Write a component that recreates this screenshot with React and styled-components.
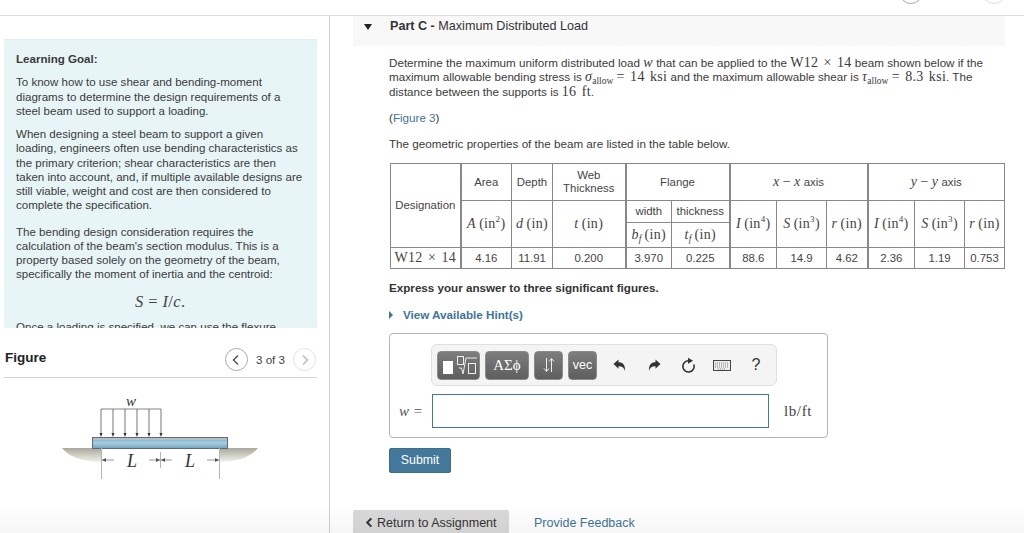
import React from "react";
import styled, { createGlobalStyle } from "styled-components";

const Global = createGlobalStyle`
  html, body { margin: 0; padding: 0; background: #fff; }
  body { font-family: "Liberation Sans", Arial, sans-serif; color: #333; }
`;

const Page = styled.div`
  position: relative;
  width: 1024px;
  height: 533px;
  overflow: hidden;
  background: #fff;
`;
const TopBar = styled.div`
  height: 15px;
  border-bottom: 1px solid #dcdcdc;
  overflow: hidden;
  display: flex;
  justify-content: flex-end;
  gap: 59px;
  padding-right: 18px;
`;
const TopCircle = styled.div`
  width: 22px;
  height: 22px;
  margin-top: -20px;
  border-radius: 50%;
  border: 1px solid ${(p) => (p.$faint ? "#ddd" : "#aaa")};
`;
const Main = styled.div`
  display: flex;
  height: 517px;
`;
const LeftCol = styled.aside`
  flex: none;
  box-sizing: border-box;
  border-right: 1px solid #c8d1e0;
  width: 330px;
  padding: 23px 12px 0 4px;
`;
const Goal = styled.section`
  height: 289px;
  box-sizing: border-box;
  overflow: hidden;
  background: #e8f5f7;
  border-top: 1px solid #e2edf0;
  padding: 12px 11.5px 0 12px;
  font-size: 11.55px;
  line-height: 14.25px;
  color: #3a3a3a;
`;
const GoalTitle = styled.div`
  font-weight: bold;
  margin-bottom: 9px;
`;
const GoalPara = styled.p`
  margin: 0 0 ${(p) => p.$gap || 9}px;
`;
const Formula = styled.div`
  text-align: center;
  font-family: "Liberation Serif", serif;
  font-size: 16.5px;
  line-height: 18px;
  letter-spacing: 0.4px;
  margin: 11px 0 9px -1px;
  color: #444;
`;
const FigureHead = styled.header`
  display: flex;
  align-items: center;
  height: 37px;
  margin-top: 12px;
  border-bottom: 1px solid #d4d4d4;
  padding-right: 1px;
`;
const FigureTitle = styled.h2`
  margin: 0 auto 3px 1px;
  font-size: 13.5px;
  font-weight: bold;
  color: #222;
`;
const Pager = styled.div`
  display: flex;
  align-items: center;
  gap: 8px;
  font-size: 11.6px;
  color: #444;
  margin-top: 2px;
`;
const Round = styled.div`
  width: 23px;
  height: 23px;
  box-sizing: border-box;
  border-radius: 50%;
  border: 1px solid ${(p) => (p.$off ? "#e2e2e2" : "#aaa")};
  color: ${(p) => (p.$off ? "#bbb" : "#555")};
  display: flex;
  align-items: center;
  justify-content: center;
`;
const Diagram = styled.svg`
  display: block;
`;
const RightCol = styled.main`
  flex: 1;
  padding-left: 23px;
  padding-right: 19px;
`;
const PartBar = styled.div`
  height: 30px;
  background: #f8f8f8;
  display: flex;
  padding-left: 11px;
  font-size: 12.6px;
  line-height: 21px;
  color: #333;
`;
const Triangle = styled.div`
  width: 0;
  height: 0;
  margin-top: 8px;
  margin-right: 18px;
  border-left: 4.5px solid transparent;
  border-right: 4.5px solid transparent;
  border-top: 6px solid #222;
`;
const Strong = styled.b`
  font-weight: bold;
`;
const Body = styled.div`
  padding-left: 36px;
  font-size: 11.65px;
  line-height: 14.3px;
  color: #3a3a3a;
`;
const Para = styled.p`
  margin: ${(p) => p.$top}px 0 0;
  width: 600px;
`;
const Link = styled.span`
  color: #3f7496;
`;
const Mi = styled.i`
  font-family: "Liberation Serif", serif;
  font-size: ${(p) => p.$size || 14}px;
  line-height: 1;
  letter-spacing: 0.3px;
`;
const Mn = styled.span`
  font-family: "Liberation Serif", serif;
  font-size: ${(p) => p.$size || 14}px;
  line-height: 1;
  letter-spacing: 0.3px;
  word-spacing: 1.5px;
`;
const Sub = styled.sub`
  font-family: "Liberation Serif", serif;
  font-size: 9.5px;
  line-height: 0;
`;
const Sup = styled.sup`
  font-family: "Liberation Serif", serif;
  font-size: 9px;
  line-height: 0;
`;
const Table = styled.table`
  margin: 12px 0 0 1px;
  width: 614px;
  table-layout: fixed;
  border-collapse: collapse;
  border-top: 1px solid #222;
  border-left: 1px solid #555;
  border-right: 1px solid #555;
  border-bottom: 1px solid #555;
  font-size: 11.4px;
  line-height: 13.5px;
  color: #444;
`;
const Tr = styled.tr`
  height: ${(p) => p.$h}px;
`;
const Td = styled.td`
  border: 1px solid #888;
  border-right-width: ${(p) => (p.$thick ? 2 : 1)}px;
  padding: 0;
  text-align: center;
  vertical-align: middle;
  white-space: nowrap;
`;
const Express = styled.p`
  margin: 12px 0 0;
  font-weight: bold;
  color: #333;
`;
const Hint = styled.div`
  margin-top: 12px;
  display: flex;
  align-items: center;
  font-weight: bold;
  color: #3f7496;
`;
const HintArrow = styled.div`
  width: 0;
  height: 0;
  margin-right: 10px;
  border-top: 4.5px solid transparent;
  border-bottom: 4.5px solid transparent;
  border-left: 4.5px solid #3f7496;
`;
const AnswerBox = styled.div`
  margin-top: 11px;
  width: 439px;
  height: 105px;
  box-sizing: border-box;
  border: 1px solid #b4b4b4;
  border-radius: 4px;
  padding: 10px 9px 0 9px;
`;
const Toolbar = styled.div`
  margin-left: 32px;
  width: 346px;
  height: 42px;
  box-sizing: border-box;
  display: flex;
  align-items: center;
  padding: 0 5px;
  gap: 5px;
  background: #f4f4f4;
  border: 1px solid #e0e0e0;
  border-radius: 6px;
`;
const ToolBtn = styled.div`
  width: ${(p) => p.$w}px;
  height: 29px;
  flex: none;
  display: flex;
  align-items: center;
  justify-content: center;
  border-radius: 4px;
  border: 1px solid #8a8a8a;
  box-sizing: border-box;
  background: linear-gradient(#7d7d7d, #5e5e5e);
  color: #fff;
  font-size: ${(p) => p.$fs || 13}px;
  font-family: ${(p) => (p.$serif ? '"Liberation Serif", serif' : '"Liberation Sans", sans-serif')};
`;
const ToolIcon = styled.div`
  width: ${(p) => p.$w}px;
  flex: none;
  margin-left: ${(p) => p.$ml}px;
  display: flex;
  justify-content: center;
  color: #333;
  font-size: 16px;
`;
const InputRow = styled.div`
  display: flex;
  align-items: center;
  margin-top: 8px;
`;
const Label = styled.div`
  width: 33px;
  color: #555;
  font-family: "Liberation Serif", serif;
  font-size: 15px;
  word-spacing: 1px;
`;
const Input = styled.div`
  width: 337px;
  height: 34px;
  box-sizing: border-box;
  border: 1px solid #44789b;
  background: #fff;
`;
const Unit = styled.div`
  margin-left: 15px;
  font-family: "Liberation Serif", serif;
  font-size: 15px;
  letter-spacing: 0.6px;
  color: #444;
`;
const Submit = styled.div`
  margin-top: 10px;
  width: 62px;
  height: 25px;
  box-sizing: border-box;
  display: flex;
  align-items: center;
  justify-content: center;
  background: #44789b;
  border: 1px solid #3d6f8f;
  border-radius: 2px;
  color: #fff;
  font-size: 12.3px;
`;
const Footer = styled.div`
  margin-top: 37px;
  display: flex;
  align-items: center;
  gap: 25px;
  font-size: 12.5px;
`;
const ReturnBtn = styled.div`
  width: 156px;
  height: 24px;
  flex: none;
  box-sizing: border-box;
  display: flex;
  align-items: center;
  gap: 2px;
  padding: 1px 0 0 11px;
  background: #d9d9d9;
  border-radius: 2px 2px 0 0;
  color: #333;
`;
const FeedbackLink = styled(Link)`
  padding-top: 1px;
`;
const Shade = styled.div`
  position: absolute;
  left: 0;
  right: 0;
  bottom: 0;
  height: 30px;
  pointer-events: none;
  background: linear-gradient(rgba(0, 0, 0, 0), rgba(0, 0, 0, 0.035));
`;

const Chevron = ({ left, size = 12, sw = 1.5 }) => (
  <svg width={size} height={size} viewBox="0 0 12 12" fill="none" stroke="currentColor" strokeWidth={sw}>
    <path d={left ? "M8 1.5 3.5 6 8 10.5" : "M4 1.5 8.5 6 4 10.5"} />
  </svg>
);

const BeamDiagram = () => {
  const xs = [101, 113, 125, 137, 149, 161];
  return (
    <Diagram width="313" height="110" viewBox="4 378 313 110">
      <defs>
        <linearGradient id="beam" x1="0" y1="0" x2="0" y2="1">
          <stop offset="0" stopColor="#6ea8c6" />
          <stop offset="0.5" stopColor="#a7cfe0" />
          <stop offset="1" stopColor="#6ba3c0" />
        </linearGradient>
        <linearGradient id="g1" x1="0" y1="0" x2="0" y2="1">
          <stop offset="0" stopColor="#a9a998" />
          <stop offset="1" stopColor="#f2f2ec" />
        </linearGradient>
      </defs>
      <text x="131" y="406" fontFamily="Liberation Serif, serif" fontStyle="italic" fontSize="15" fill="#333" textAnchor="middle">w</text>
      <path d="M101 409H161" stroke="#666" strokeWidth="0.8" fill="none" />
      {xs.map((x) => (
        <g key={x}>
          <path d={`M${x} 409V435`} stroke="#555" strokeWidth="0.8" />
          <path d={`M${x - 1.5} 433H${x + 1.5}L${x} 437Z`} fill="#333" />
        </g>
      ))}
      <path d="M62 448H101V462C85 462 70 458 62 448Z" fill="url(#g1)" />
      <path d="M219 448H258C250 458 235 462 219 462Z" fill="url(#g1)" />
      <path d="M66 448.5H101M219 448.5H254" stroke="#aaa" strokeWidth="1" />
      <rect x="92.5" y="437.5" width="135" height="11" fill="url(#beam)" stroke="#667" strokeWidth="1" />
      <rect x="93" y="438" width="134" height="2" fill="#b5c0c6" />
      <path d="M101.5 448V479M219.5 448V479M160.5 452V468" stroke="#b5b5b5" strokeWidth="1" />
      <path d="M102 460H114M149 460H172M207 460H219" stroke="#999" strokeWidth="1" />
      <path d="M102 460l4-2v4ZM219 460l-4-2v4ZM160 460l-4-2v4ZM161 460l4-2v4Z" fill="#555" />
      <text x="132" y="467" fontFamily="Liberation Serif, serif" fontStyle="italic" fontSize="18" fill="#333" textAnchor="middle">L</text>
      <text x="190" y="467" fontFamily="Liberation Serif, serif" fontStyle="italic" fontSize="18" fill="#333" textAnchor="middle">L</text>
    </Diagram>
  );
};

const TemplateIcon = () => (
  <svg width="41" height="27" viewBox="0 0 41 27" fill="none">
    <rect x="5" y="9" width="10" height="13" fill="#fff" />
    <rect x="19.5" y="4.5" width="6" height="8" stroke="#eee" strokeWidth="1" />
    <path d="M21 16l2.5 0 1.5 6 3-16H39" stroke="#eee" strokeWidth="1" />
    <rect x="30.5" y="11.5" width="7" height="10" stroke="#eee" strokeWidth="1" />
  </svg>
);
const SwapIcon = () => (
  <svg width="14" height="16" viewBox="0 0 14 16" fill="none" stroke="#eee" strokeWidth="1">
    <path d="M4.5 1V14M2 11.5 4.5 14.5 7 11.5" />
    <path d="M9.5 15V2M7 4.5 9.5 1.5 12 4.5" />
  </svg>
);
const UndoIcon = ({ flip }) => (
  <svg width="13" height="13" viewBox="0 0 13 13" fill="#333" transform={flip ? "scale(-1 1)" : undefined}>
    <path d="M0.5 5 5.5 0.5V3.2C9.5 3.2 12.5 5.5 12 12 11 8.5 9 7.3 5.5 7.3V9.7Z" />
  </svg>
);
const ResetIcon = () => (
  <svg width="15" height="16" viewBox="0 0 15 16" fill="none">
    <path d="M7 3.8A5.6 5.6 0 1 0 12.8 7.6" stroke="#333" strokeWidth="1.6" />
    <path d="M7 0.8 12 3.8 7 6.8Z" fill="#333" />
  </svg>
);
const KeyboardIcon = () => (
  <svg width="18" height="11" viewBox="0 0 18 11" fill="#eee" stroke="#444" strokeWidth="1">
    <rect x="0.5" y="0.5" width="17" height="10" />
    <path d="M2 3H16M2 5H16M2 7H16M5 9H13" stroke="#888" strokeWidth="1" strokeDasharray="1 1" fill="none" />
  </svg>
);

const In = ({ v, s, p = 0 }) => (
  <>
    <Mi>{v}</Mi>{s ? <Sub><i>{s}</i></Sub> : null} <Mn>(in{p ? <Sup>{p}</Sup> : null})</Mn>
  </>
);

const Cols = [70, 51, 41, 73, 46, 58, 47, 50, 41, 47, 50, 40];

const App = () => (
  <Page>
    <Global />
    <TopBar>
      <TopCircle />
      <TopCircle $faint />
    </TopBar>
    <Main>
      <LeftCol>
        <Goal>
          <GoalTitle>Learning Goal:</GoalTitle>
          <GoalPara>To know how to use shear and bending-moment diagrams to determine the design requirements of a steel beam used to support a loading.</GoalPara>
          <GoalPara $gap={12}>When designing a steel beam to support a given loading, engineers often use bending characteristics as the primary criterion; shear characteristics are then taken into account, and, if multiple available designs are still viable, weight and cost are then considered to complete the specification.</GoalPara>
          <GoalPara>The bending design consideration requires the calculation of the beam's section modulus. This is a property based solely on the geometry of the beam, specifically the moment of inertia and the centroid:</GoalPara>
          <Formula><i>S</i> = <i>I</i>/<i>c</i>.</Formula>
          <GoalPara>Once a loading is specified, we can use the flexure</GoalPara>
        </Goal>
        <FigureHead>
          <FigureTitle>Figure</FigureTitle>
          <Pager>
            <Round><Chevron left /></Round>
            <span>3 of 3</span>
            <Round $off><Chevron /></Round>
          </Pager>
        </FigureHead>
        <BeamDiagram />
      </LeftCol>
      <RightCol>
        <PartBar>
          <Triangle />
          <span><Strong>Part C -</Strong> Maximum Distributed Load</span>
        </PartBar>
        <Body>
          <Para $top={10}>
            Determine the maximum uniform distributed load <Mi>w</Mi> that can be applied to the <Mn>W12 × 14</Mn> beam shown below if the maximum allowable bending stress is <Mi>σ</Mi><Sub>allow</Sub> <Mn>= 14 ksi</Mn> and the maximum allowable shear is <Mi>τ</Mi><Sub>allow</Sub> <Mn>= 8.3 ksi</Mn>. The distance between the supports is <Mn>16 ft</Mn>.
          </Para>
          <Para $top={12}>(<Link>Figure 3</Link>)</Para>
          <Para $top={12}>The geometric properties of the beam are listed in the table below.</Para>
          <Table>
            <colgroup>
              {Cols.map((w, i) => <col key={i} width={w} />)}
            </colgroup>
            <tbody>
              <Tr $h={37}>
                <Td rowSpan={3} $thick>Designation</Td>
                <Td>Area</Td>
                <Td>Depth</Td>
                <Td $thick>Web<br />Thickness</Td>
                <Td colSpan={2} $thick>Flange</Td>
                <Td colSpan={3} $thick><Mi>x</Mi> <Mn>−</Mn> <Mi>x</Mi> axis</Td>
                <Td colSpan={3}><Mi>y</Mi> <Mn>−</Mn> <Mi>y</Mi> axis</Td>
              </Tr>
              <Tr $h={22}>
                <Td rowSpan={2}><In v="A" p={2} /></Td>
                <Td rowSpan={2}><In v="d" /></Td>
                <Td rowSpan={2} $thick><In v="t" /></Td>
                <Td>width</Td>
                <Td $thick>thickness</Td>
                <Td rowSpan={2}><In v="I" p={4} /></Td>
                <Td rowSpan={2}><In v="S" p={3} /></Td>
                <Td rowSpan={2} $thick><In v="r" /></Td>
                <Td rowSpan={2}><In v="I" p={4} /></Td>
                <Td rowSpan={2}><In v="S" p={3} /></Td>
                <Td rowSpan={2}><In v="r" /></Td>
              </Tr>
              <Tr $h={25}>
                <Td><In v="b" s="f" /></Td>
                <Td $thick><In v="t" s="f" /></Td>
              </Tr>
              <Tr $h={21}>
                <Td $thick><Mn>W12 × 14</Mn></Td>
                <Td>4.16</Td>
                <Td>11.91</Td>
                <Td $thick>0.200</Td>
                <Td>3.970</Td>
                <Td $thick>0.225</Td>
                <Td>88.6</Td>
                <Td>14.9</Td>
                <Td $thick>4.62</Td>
                <Td>2.36</Td>
                <Td>1.19</Td>
                <Td>0.753</Td>
              </Tr>
            </tbody>
          </Table>
          <Express>Express your answer to three significant figures.</Express>
          <Hint><HintArrow />View Available Hint(s)</Hint>
          <AnswerBox>
            <Toolbar>
              <ToolBtn $w={43}><TemplateIcon /></ToolBtn>
              <ToolBtn $w={44} $serif $fs={15}>ΑΣϕ</ToolBtn>
              <ToolBtn $w={29}><SwapIcon /></ToolBtn>
              <ToolBtn $w={29} $fs={12.5}>vec</ToolBtn>
              <ToolIcon $w={14} $ml={10}><UndoIcon /></ToolIcon>
              <ToolIcon $w={14} $ml={16}><UndoIcon flip /></ToolIcon>
              <ToolIcon $w={16} $ml={14}><ResetIcon /></ToolIcon>
              <ToolIcon $w={18} $ml={12}><KeyboardIcon /></ToolIcon>
              <ToolIcon $w={12} $ml={14}>?</ToolIcon>
            </Toolbar>
            <InputRow>
              <Label><i>w</i> =</Label>
              <Input />
              <Unit>lb/ft</Unit>
            </InputRow>
          </AnswerBox>
          <Submit>Submit</Submit>
        </Body>
        <Footer>
          <ReturnBtn><Chevron left size={11} sw={2.2} />Return to Assignment</ReturnBtn>
          <FeedbackLink>Provide Feedback</FeedbackLink>
        </Footer>
      </RightCol>
    </Main>
    <Shade />
  </Page>
);

export default App;
